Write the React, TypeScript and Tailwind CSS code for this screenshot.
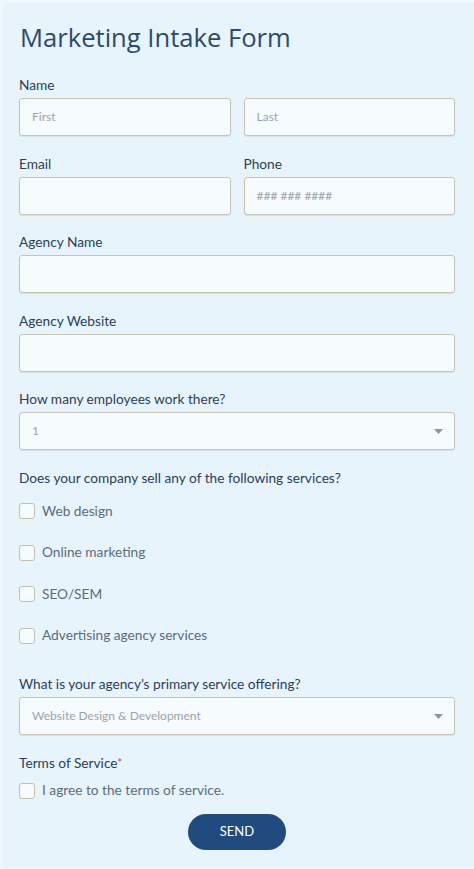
import React from "react";

const labelCls =
  "block text-[13.7px] leading-[20px] text-[#2b3f57] mb-[3px]";
const inputCls =
  "h-[38px] w-full rounded-[3px] border border-[#c9c4b2] bg-[#f6fbfe] px-[12px] text-[12px] text-[#9aa3ad] flex items-center shadow-[0_1px_1px_rgba(0,0,0,0.08)]";

function Caret() {
  return (
    <svg width="9" height="5" viewBox="0 0 9 5" className="shrink-0">
      <path d="M0 0 L9 0 L4.5 5 Z" fill="#8b949d" />
    </svg>
  );
}

function Box() {
  return (
    <div className="h-[16px] w-[16px] shrink-0 rounded-[3px] border border-[#c5c0ae] bg-[#f6fbfe]" />
  );
}

export default function App() {
  const services = [
    "Web design",
    "Online marketing",
    "SEO/SEM",
    "Advertising agency services",
  ];
  return (
    <div
      className="min-h-[869px] w-[474px] bg-[#e8f4fb] border-t-[3px] border-l-[3px] border-b-[3px] border-[#eef7fc] pl-[16px] pr-[19px] pt-[19px] pb-[17px]"
      style={{ fontFamily: "Lato, 'Open Sans', sans-serif" }}
    >
      <h1
        className="text-[25.6px] leading-[32px] text-[#2d4a6c] mb-[21px] ml-[1px]"
        style={{ fontFamily: "'Open Sans', sans-serif" }}
      >
        Marketing Intake Form
      </h1>

      <div className="flex flex-col gap-[17.5px]">
        <div>
          <label className={labelCls}>Name</label>
          <div className="flex gap-[13px]">
            <div className={inputCls}>First</div>
            <div className={inputCls}>Last</div>
          </div>
        </div>

        <div className="flex gap-[13px]">
          <div className="flex-1">
            <label className={labelCls}>Email</label>
            <div className={inputCls}></div>
          </div>
          <div className="flex-1">
            <label className={labelCls}>Phone</label>
            <div className={inputCls}>### ### ####</div>
          </div>
        </div>

        <div>
          <label className={labelCls}>Agency Name</label>
          <div className={inputCls}></div>
        </div>

        <div>
          <label className={labelCls}>Agency Website</label>
          <div className={inputCls}></div>
        </div>

        <div>
          <label className={labelCls}>How many employees work there?</label>
          <div className={inputCls + " justify-between pr-[11px]"}>
            <span>1</span>
            <Caret />
          </div>
        </div>

        <div>
          <label className={labelCls + " mb-[2px]"}>
            Does your company sell any of the following services?
          </label>
          <div className="flex flex-col">
            {services.map((s) => (
              <div key={s} className="flex h-[41.5px] items-center gap-[7px]">
                <Box />
                <span className="text-[13.7px] text-[#5d6b7a]">{s}</span>
              </div>
            ))}
          </div>
        </div>

        <div>
          <label className={labelCls}>
            What is your agency’s primary service offering?
          </label>
          <div className={inputCls + " justify-between pr-[11px]"}>
            <span>Website Design &amp; Development</span>
            <Caret />
          </div>
        </div>

        <div>
          <label className={labelCls}>
            Terms of Service<span className="text-[#d0312d] text-[11px] align-top">*</span>
          </label>
          <div className="mt-[8px] flex h-[20px] items-center gap-[7px]">
            <Box />
            <span className="text-[13.7px] text-[#5d6b7a]">
              I agree to the terms of service.
            </span>
          </div>
          <div className="mt-[13px] flex justify-center">
            <button className="h-[36px] w-[98px] rounded-full bg-[#1f4b7e] text-[13px] text-white">
              SEND
            </button>
          </div>
        </div>
      </div>
    </div>
  );
}
